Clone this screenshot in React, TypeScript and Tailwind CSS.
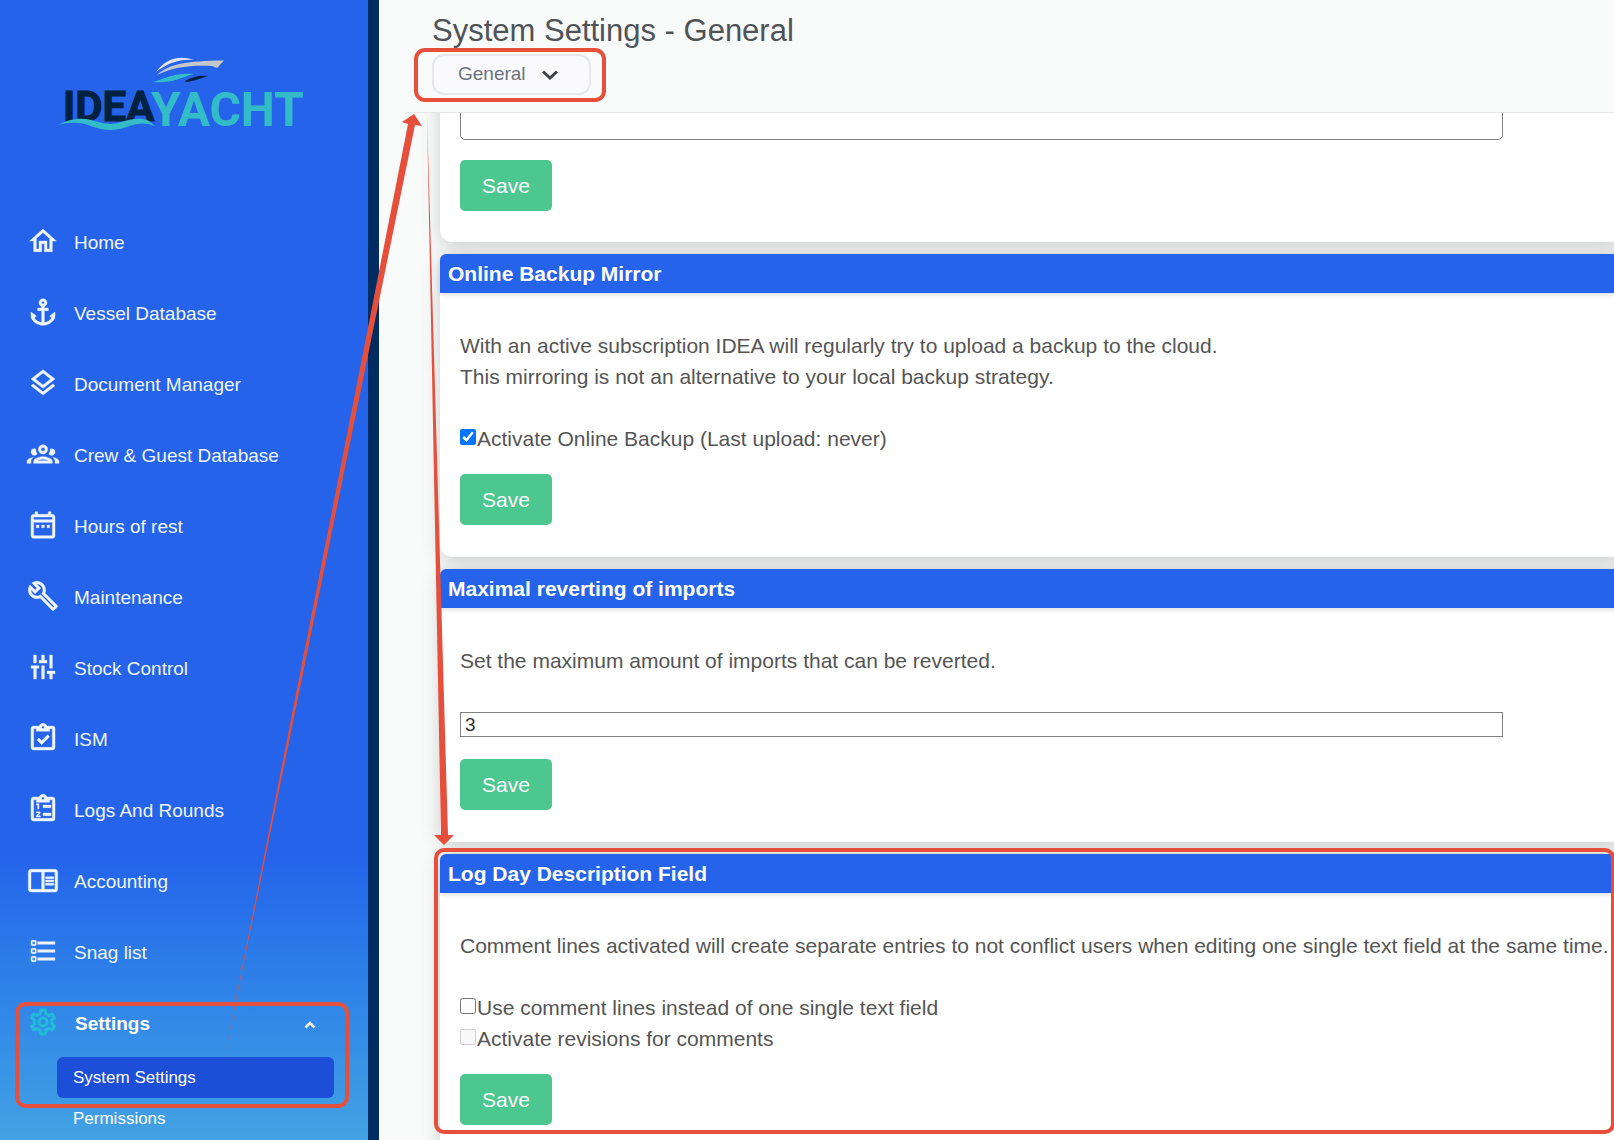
import type { ReactNode } from "react";
import {
  MdAnchor,
  MdOutlineChromeReaderMode,
  MdOutlineHome,
  MdOutlineLayers,
  MdTune,
} from "react-icons/md";

const CLIPBOARD =
  "M19,3H14.82C14.4,1.84 13.3,1 12,1C10.7,1 9.6,1.84 9.18,3H5A2,2 0 0,0 3,5V19A2,2 0 0,0 5,21H19A2,2 0 0,0 21,19V5A2,2 0 0,0 19,3M12,3A1,1 0 0,1 13,4A1,1 0 0,1 12,5A1,1 0 0,1 11,4A1,1 0 0,1 12,3M7,7H17V5H19V19H5V5H7V7";

const PATHS = {
  group:
    "M12,5A3.5,3.5 0 0,0 8.5,8.5A3.5,3.5 0 0,0 12,12A3.5,3.5 0 0,0 15.5,8.5A3.5,3.5 0 0,0 12,5M12,7A1.5,1.5 0 0,1 13.5,8.5A1.5,1.5 0 0,1 12,10A1.5,1.5 0 0,1 10.5,8.5A1.5,1.5 0 0,1 12,7M5.5,8A2.5,2.5 0 0,0 3,10.5C3,11.44 3.53,12.25 4.29,12.68C4.65,12.88 5.06,13 5.5,13C5.94,13 6.35,12.88 6.71,12.68C7.08,12.47 7.39,12.17 7.62,11.81C6.89,10.86 6.5,9.7 6.5,8.5C6.5,8.41 6.5,8.31 6.5,8.22C6.2,8.08 5.86,8 5.5,8M18.5,8C18.14,8 17.8,8.08 17.5,8.22C17.5,8.31 17.5,8.41 17.5,8.5C17.5,9.7 17.11,10.86 16.38,11.81C16.5,12 16.63,12.15 16.78,12.3C16.94,12.45 17.1,12.58 17.29,12.68C17.65,12.88 18.06,13 18.5,13C18.94,13 19.35,12.88 19.71,12.68C20.47,12.25 21,11.44 21,10.5A2.5,2.5 0 0,0 18.5,8M12,14C9.66,14 5,15.17 5,17.5V19H19V17.5C19,15.17 14.34,14 12,14M4.71,14.55C2.78,14.78 0,15.76 0,17.5V19H3V17.07C3,16.06 3.69,15.22 4.71,14.55M19.29,14.55C20.31,15.22 21,16.06 21,17.07V19H24V17.5C24,15.76 21.22,14.78 19.29,14.55M12,16C13.53,16 15.24,16.5 16.23,17H7.77C8.76,16.5 10.47,16 12,16Z",
  calendar:
    "M7 12H9V14H7V12M21 6V20C21 21.11 20.11 22 19 22H5C3.89 22 3 21.1 3 20V6C3 4.9 3.9 4 5 4H6V2H8V4H16V2H18V4H19C20.11 4 21 4.9 21 6M5 8H19V6H5V8M19 20V10H5V20H19M15 14V12H17V14H15M11 14V12H13V14H11Z",
  wrench:
    "M22.61,19L13.53,9.91C14.46,7.57 14,4.81 12.09,2.91C9.79,0.61 6.21,0.4 3.66,2.26L7.5,6.11L6.08,7.52L2.25,3.69C0.39,6.23 0.6,9.82 2.9,12.11C4.76,13.97 7.47,14.46 9.79,13.59L18.9,22.7C19.29,23.09 19.92,23.09 20.31,22.7L22.61,20.4C23,20 23,19.39 22.61,19M19.61,20.59L10.15,11.13C9.54,11.58 8.86,11.85 8.15,11.95C6.79,12.15 5.36,11.74 4.32,10.7C3.37,9.76 2.93,8.5 3,7.26L6.09,10.35L10.33,6.11L7.24,3C8.48,2.96 9.73,3.41 10.68,4.35C11.76,5.43 12.17,6.92 11.92,8.31C11.8,9 11.5,9.66 11.04,10.25L20.5,19.7L19.61,20.59Z",
  clipboardCheck: CLIPBOARD + "M7.5,13.5L9,12L11,14L15.5,9.5L17,11L11,17L7.5,13.5Z",
  clipboardNumber:
    CLIPBOARD +
    "M12,9H18V11H12V9M12,15H18V17H12V15M8,12V9H7V8H9V12H8M9.25,14A0.75,0.75 0 0,1 10,14.75C10,14.95 9.92,15.14 9.79,15.27L8.12,17H10V18H7V17.08L9,15H7V14H9.25Z",
  checkList:
    "M21,19V17H8V19H21M21,13V11H8V13H21M8,7H21V5H8V7M4,5V7H6V5H4M3,5A1,1 0 0,1 4,4H6A1,1 0 0,1 7,5V7A1,1 0 0,1 6,8H4A1,1 0 0,1 3,7V5M4,11V13H6V11H4M3,11A1,1 0 0,1 4,10H6A1,1 0 0,1 7,11V13A1,1 0 0,1 6,14H4A1,1 0 0,1 3,13V11M4,17V19H6V17H4M3,17A1,1 0 0,1 4,16H6A1,1 0 0,1 7,17V19A1,1 0 0,1 6,20H4A1,1 0 0,1 3,19V17Z",
  cog: "M12,8A4,4 0 0,1 16,12A4,4 0 0,1 12,16A4,4 0 0,1 8,12A4,4 0 0,1 12,8M12,10A2,2 0 0,0 10,12A2,2 0 0,0 12,14A2,2 0 0,0 14,12A2,2 0 0,0 12,10M10,22C9.75,22 9.54,21.82 9.5,21.58L9.13,18.93C8.5,18.68 7.96,18.34 7.44,17.94L4.95,18.95C4.73,19.03 4.46,18.95 4.34,18.73L2.34,15.27C2.21,15.05 2.27,14.78 2.46,14.63L4.57,12.97L4.5,12L4.57,11L2.46,9.37C2.27,9.22 2.21,8.95 2.34,8.73L4.34,5.27C4.46,5.05 4.73,4.96 4.95,5.05L7.44,6.05C7.96,5.66 8.5,5.32 9.13,5.07L9.5,2.42C9.54,2.18 9.75,2 10,2H14C14.25,2 14.46,2.18 14.5,2.42L14.87,5.07C15.5,5.32 16.04,5.66 16.56,6.05L19.05,5.05C19.27,4.96 19.54,5.05 19.66,5.27L21.66,8.73C21.79,8.95 21.73,9.22 21.54,9.37L19.43,11L19.5,12L19.43,13L21.54,14.63C21.73,14.78 21.79,15.05 21.66,15.27L19.66,18.73C19.54,18.95 19.27,19.04 19.05,18.95L16.56,17.95C16.04,18.34 15.5,18.68 14.87,18.93L14.5,21.58C14.46,21.82 14.25,22 14,22H10M11.25,4L10.88,6.61C9.68,6.86 8.62,7.5 7.85,8.39L5.44,7.35L4.69,8.65L6.8,10.2C6.4,11.37 6.4,12.64 6.8,13.8L4.68,15.36L5.43,16.66L7.86,15.62C8.63,16.5 9.68,17.14 10.87,17.38L11.24,20H12.76L13.13,17.39C14.32,17.14 15.37,16.5 16.14,15.62L18.57,16.66L19.32,15.36L17.2,13.81C17.6,12.64 17.6,11.37 17.2,10.2L19.31,8.65L18.56,7.35L16.15,8.39C15.38,7.5 14.32,6.86 13.12,6.62L12.75,4H11.25Z",
};

function Glyph({ d }: { d: string }) {
  return (
    <svg viewBox="0 0 24 24" fill="currentColor" stroke="currentColor" className="size-8 overflow-visible stroke-[0.3]" aria-hidden="true">
      <path d={d} />
    </svg>
  );
}

const ICON = "size-8 [&>path:last-child]:stroke-[0.3]";

const NAV: { label: string; icon: ReactNode }[] = [
  { label: "Home", icon: <MdOutlineHome className={ICON} /> },
  { label: "Vessel Database", icon: <MdAnchor className={ICON} /> },
  { label: "Document Manager", icon: <MdOutlineLayers className={ICON} /> },
  { label: "Crew & Guest Database", icon: <Glyph d={PATHS.group} /> },
  { label: "Hours of rest", icon: <Glyph d={PATHS.calendar} /> },
  { label: "Maintenance", icon: <Glyph d={PATHS.wrench} /> },
  { label: "Stock Control", icon: <MdTune className="size-8 rotate-90 [&>path:last-child]:stroke-[0.3]" /> },
  { label: "ISM", icon: <Glyph d={PATHS.clipboardCheck} /> },
  { label: "Logs And Rounds", icon: <Glyph d={PATHS.clipboardNumber} /> },
  { label: "Accounting", icon: <MdOutlineChromeReaderMode className={ICON} /> },
  { label: "Snag list", icon: <Glyph d={PATHS.checkList} /> },
];

function Logo() {
  return (
    <svg viewBox="0 0 270 90" className="h-[90px] w-[270px]" role="img" aria-label="IDEA YACHT">
      <g fontFamily="Roboto, sans-serif" fontWeight="700">
        <text x="6" y="71" fontSize="42" fill="#00213f" stroke="#00213f" strokeWidth="1">IDEA</text>
        <text x="94" y="76" fontSize="48" fill="#33bcc8">YACHT</text>
      </g>
      <path d="M1 75C10 70 22 67 34 70C46 73 52 76 64 72C74 69 84 67 92 71L98 76C88 72 80 73 70 77C56 82 44 80 34 76C24 72 12 72 1 75Z" fill="#33bcc8" />
      <path d="M99 22C107 11 120 4 137 10C121 9 110 14 99 22Z" fill="#dfe3ea" />
      <path d="M100 25C112 14 128 11 167 10.500L160 18L155 16C134 15 116 17 100 25Z" fill="#c3c6ca" />
      <path d="M96 32C106 29 118 22 137 24C125 27 114 34 96 32Z" fill="#33bcc8" />
      <path d="M128 31C135 27 142 25 151 26C144 28 138 31 129 32Z" fill="#00213f" />
    </svg>
  );
}

function Sidebar() {
  return (
    <aside className="flex w-[379px] shrink-0 flex-col overflow-hidden border-r-[11px] border-[#012c61] bg-linear-to-b from-[#2563eb] from-75% to-[#43a2e3] text-white">
      <div className="flex h-[205px] shrink-0 items-start pt-[50px] pl-[57px]">
        <Logo />
      </div>
      <nav aria-label="Main">
        <ul>
          {NAV.map((item) => (
            <li key={item.label}>
              <a href="#" className="flex h-[71px] items-center gap-[15px] pl-[27px] text-[19px] text-blue-50">
                {item.icon}
                <span className="pt-1.5">{item.label}</span>
              </a>
            </li>
          ))}
          <li>
            <button type="button" aria-expanded="true" className="flex h-[71px] w-full items-center gap-4 pr-[52px] pl-[27px] text-[19px] font-bold">
              <span className="text-[#22bcd8]">
                <Glyph d={PATHS.cog} />
              </span>
              <span className="pt-1.5">Settings</span>
              <svg viewBox="0 0 12 8" className="mt-1.5 ml-auto h-2 w-3" fill="none" stroke="currentColor" strokeWidth="2.5" aria-hidden="true">
                <path d="M1.500 6.500L6 2L10.500 6.500" />
              </svg>
            </button>
            <ul className="pr-[34px] pl-[57px] text-[17px]">
              <li>
                <a href="#" aria-current="page" className="flex h-[41px] items-center rounded-md bg-[#1d4ed8] pl-4">
                  System Settings
                </a>
              </li>
              <li>
                <a href="#" className="flex h-[41px] items-center pl-4">
                  Permissions
                </a>
              </li>
            </ul>
          </li>
        </ul>
      </nav>
    </aside>
  );
}

function SaveButton() {
  return (
    <button type="submit" className="h-[51px] self-start rounded-[5px] bg-[#4bc78f] px-[22px] text-[21px] text-white">
      Save
    </button>
  );
}

function Card({ title, children }: { title: string; children: ReactNode }) {
  return (
    <section className="rounded-t-md rounded-b-xl bg-white pb-8 shadow-[0_4px_20px_rgba(0,0,0,0.18)]">
      <h2 className="flex h-[39px] items-center rounded-t-md bg-[#2563eb] px-2 text-[21px] font-bold text-white shadow-[0_2px_5px_rgba(0,0,0,0.12)]">
        {title}
      </h2>
      <form className="flex flex-col gap-5 px-5 pt-[37px]">{children}</form>
    </section>
  );
}

function CheckLine({ label, checked, disabled }: { label: string; checked?: boolean; disabled?: boolean }) {
  return (
    <label className="flex items-center gap-px">
      <input type="checkbox" defaultChecked={checked} disabled={disabled} className="mb-1 size-4" />
      {label}
    </label>
  );
}

function Arrows() {
  return (
    <svg
      className="pointer-events-none absolute top-0 left-0 h-[1140px] w-[480px]"
      viewBox="0 0 480 1140"
      fill="#e54f3b"
      aria-hidden="true"
    >
      <path d="M224 1060L408 124L402 122L414 114L422 126L415 125Z" />
      <path d="M427 115L441 835L434 835L444 845L454 835L448 835Z" />
    </svg>
  );
}

export default function App() {
  return (
    <div className="relative flex h-screen overflow-hidden bg-[#f9fafa] font-['Liberation_Sans',Arial,sans-serif] text-[#555]">
      <Sidebar />
      <main className="flex min-w-0 flex-1 flex-col pl-[27px]">
        <header className="relative z-10 h-[113px] shrink-0 border-b border-gray-200 bg-[#f9fafa] pt-3 pl-[26px]">
          <h1 className="text-[31px] leading-[38px] text-[#4f5357]">System Settings - General</h1>
          <div className="relative mt-1 w-[159px]">
            <select aria-label="Settings section" className="h-[41px] w-full appearance-none rounded-xl border-2 border-gray-200 bg-[#fafafc] pl-6 text-[19px] text-gray-500">
              <option>General</option>
            </select>
            <svg viewBox="0 0 16 10" className="pointer-events-none absolute top-4 right-[33px] h-[10px] w-4" fill="none" stroke="#3f444a" strokeWidth="3" aria-hidden="true">
              <path d="M1 1.500L8 8L15 1.500" />
            </svg>
          </div>
        </header>

        <div className="-mr-3 flex flex-col gap-3 overflow-hidden pl-[34px] text-[21px] leading-[31px]">
          <form className="-mt-5 flex flex-col gap-5 rounded-b-xl bg-white px-5 pb-[31px] shadow-[0_4px_20px_rgba(0,0,0,0.18)]">
            <textarea aria-label="Text" className="h-[47px] w-[91%] resize-none rounded-[5px] border border-[#808080]" />
            <SaveButton />
          </form>

          <Card title="Online Backup Mirror">
            <p>
              With an active subscription IDEA will regularly try to upload a backup to the cloud.
              <br />
              This mirroring is not an alternative to your local backup strategy.
            </p>
            <div className="pt-[11px]">
              <CheckLine label="Activate Online Backup (Last upload: never)" checked />
            </div>
            <SaveButton />
          </Card>

          <Card title="Maximal reverting of imports">
            <p>Set the maximum amount of imports that can be reverted.</p>
            <input type="text" aria-label="Maximum imports" defaultValue="3" className="mt-4 mb-0.5 h-[25px] w-[91%] border border-[#808080] px-1 text-[19px] leading-[22px] text-[#333]" />
            <SaveButton />
          </Card>

          <div className="relative">
            <Card title="Log Day Description Field">
              <p className="whitespace-nowrap">
                Comment lines activated will create separate entries to not conflict users when editing one single text field at the same time.
              </p>
              <div className="pt-[11px]">
                <CheckLine label="Use comment lines instead of one single text field" />
                <CheckLine label="Activate revisions for comments" disabled />
              </div>
              <SaveButton />
            </Card>
            <div className="pointer-events-none absolute -top-[6px] right-[11px] -left-[6px] h-[286px] rounded-[10px] border-4 border-[#e54f3b]" />
          </div>
        </div>
      </main>
      <Arrows />
      <div className="pointer-events-none absolute top-12 left-[414px] z-20 h-[54px] w-48 rounded-[11px] border-4 border-[#e54f3b]" />
      <div className="pointer-events-none absolute top-[1002px] left-[15px] z-20 h-[106px] w-[334px] rounded-[11px] border-4 border-[#e54f3b]" />
    </div>
  );
}
